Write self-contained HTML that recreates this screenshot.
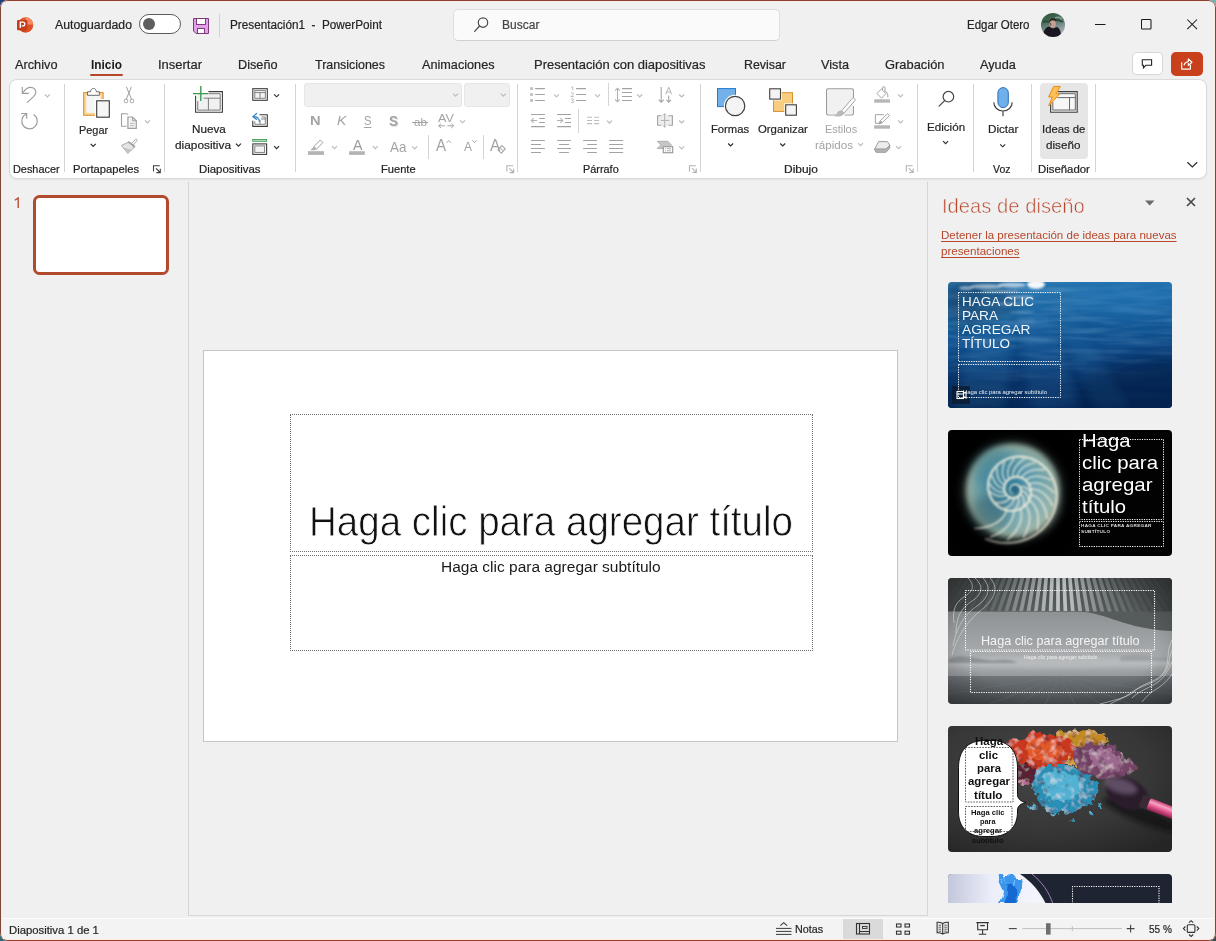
<!DOCTYPE html>
<html lang="es">
<head>
<meta charset="utf-8">
<title>Presentación1 - PowerPoint</title>
<style>
*{box-sizing:border-box;margin:0;padding:0}
html,body{width:1216px;height:941px;overflow:hidden;background:#f0f0f0;position:relative;font-family:"Liberation Sans",sans-serif}
#app{position:absolute;left:0;top:0;width:1216px;height:941px;overflow:hidden;background:#f0f0f0;border-radius:8px}
.a{position:absolute}
.t{position:absolute;white-space:pre;line-height:1;transform-origin:0 0;display:block}
svg{position:absolute;overflow:visible}
.sep{position:absolute;width:1px;background:#d4d4d4}
</style>
</head>

<body>
<div class="a" style="left:0;top:0;width:10px;height:10px;background:#1f3f7a"></div><div class="a" style="right:0;top:0;width:10px;height:10px;background:#6ab5b5"></div><div class="a" style="left:0;bottom:0;width:10px;height:10px;background:#2a6a7a"></div><div class="a" style="right:0;bottom:0;width:10px;height:10px;background:#2f4f55"></div>
<div id="app">
<!-- window frame -->
<div class="a" style="left:0;top:0;width:1216px;height:941px;border:1px solid #804636;border-top-color:#8a4034;border-bottom-color:#9c3f29;border-radius:7px;box-shadow:inset 0 0 0 1px #fbebe4;z-index:50;pointer-events:none"></div>
<!-- title bar -->
<div class="a" id="titlebar" style="left:1px;top:1px;width:1214px;height:47px;background:#f0f0f0"></div>
<div class="a" id="toggle" style="left:139px;top:14px;width:42px;height:20px;border:1px solid #5c5c5c;border-radius:10px;background:#fff"></div>
<div class="a" style="left:143px;top:18px;width:12px;height:12px;border-radius:6px;background:#5e5e5e"></div>
<div class="sep" style="left:219px;top:14px;height:23px;background:#d2d2d2"></div>
<div class="a" id="search" style="left:453px;top:9px;width:327px;height:32px;background:#fafafa;border:1px solid #dedede;border-bottom-color:#d0d0d0;border-radius:5px"></div>
<svg class="a" id="avatar" style="left:1041px;top:13px" width="24" height="24" viewBox="0 0 24 24">
<defs><clipPath id="avc"><circle cx="12" cy="12" r="12"/></clipPath>
<linearGradient id="avbg" x1="0" y1="0" x2=".35" y2="1"><stop offset="0" stop-color="#2a5238"/><stop offset=".35" stop-color="#3f6651"/><stop offset=".6" stop-color="#6b837d"/><stop offset="1" stop-color="#aab3b8"/></linearGradient>
<filter id="avb"><feGaussianBlur stdDeviation=".6"/></filter></defs>
<g clip-path="url(#avc)"><rect width="24" height="24" fill="url(#avbg)"/>
<g filter="url(#avb)"><path d="M2 9c3-2 6 1 9-1s7-1 11 1" stroke="#27493a" stroke-width="1.800" fill="none"/><path d="M14 5c2-1 5-1 7 1" stroke="#8aa595" stroke-width="1.200" fill="none"/>
<path d="M2.500 24c-1-5 1.500-9.500 5.500-10.500l4 2 4-1.500c3 1.500 4.500 5 3.500 10z" fill="#1b1722"/>
<ellipse cx="11.600" cy="10.800" rx="3.300" ry="3.900" fill="#c3a092"/><path d="M8.300 9.500c0-3 2-4.200 3.800-4.200 2 0 3.300 1.200 3.200 3-1.500-1-3-1.300-4.500-.8-1 .4-1.800 1-2.500 2z" fill="#2a211f"/>
<path d="M8.500 9.800c.8 0 1.400 1.200 1.200 2.600" stroke="#3a2a28" stroke-width="1" fill="none"/></g></g></svg>
<!-- tab underline -->
<div class="a" style="left:90px;top:73.5px;width:33px;height:2.6px;border-radius:1.3px;background:#b7472a"></div>
<!-- comment + share buttons -->
<div class="a" style="left:1131.5px;top:52.2px;width:31px;height:23.300px;background:#fff;border:1px solid #d6d6d6;border-radius:4.500px"></div>
<div class="a" style="left:1171px;top:52px;width:32px;height:24px;background:#c8401c;border-radius:5px"></div>
<!-- ribbon -->
<div class="a" id="ribbon" style="left:9px;top:79px;width:1197.5px;height:99.5px;background:#fff;border:1px solid #dadada;border-radius:8px;box-shadow:0 1px 2px rgba(0,0,0,.06)"></div>
<!-- group separators -->
<div class="sep" style="left:64px;top:84px;height:88px"></div>
<div class="sep" style="left:164px;top:84px;height:88px"></div>
<div class="sep" style="left:295px;top:84px;height:88px"></div>
<div class="sep" style="left:517px;top:84px;height:88px"></div>
<div class="sep" style="left:700px;top:84px;height:88px"></div>
<div class="sep" style="left:917px;top:84px;height:88px"></div>
<div class="sep" style="left:973px;top:84px;height:88px"></div>
<div class="sep" style="left:1031px;top:84px;height:88px"></div>
<div class="sep" style="left:1095px;top:84px;height:88px"></div>
<!-- small separators -->
<div class="sep" style="left:428px;top:135px;height:24px"></div>
<div class="sep" style="left:483px;top:135px;height:24px"></div>
<div class="sep" style="left:608px;top:83px;height:23px"></div>
<div class="sep" style="left:578px;top:109px;height:24px"></div>
<!-- font boxes -->
<div class="a" style="left:304px;top:83px;width:157.5px;height:23.5px;background:#f0f0f0;border:1px solid #e6e6e6;border-radius:3px"></div>
<div class="a" style="left:464px;top:83px;width:45.5px;height:23.5px;background:#f0f0f0;border:1px solid #e6e6e6;border-radius:3px"></div>
<!-- Ideas de diseño pressed button -->
<div class="a" style="left:1040px;top:83px;width:48px;height:75.5px;background:#e6e6e6;border-radius:4px"></div>

<!-- thumbnail pane -->
<div class="sep" style="left:188px;top:182px;height:734px;background:#d6d6d6"></div>
<div class="a" style="left:33px;top:195px;width:136px;height:80.300px;background:#fff;border:3px solid #b24a2e;border-radius:6.500px"></div>
<svg class="a" style="left:13px;top:196px" width="9" height="13" viewBox="13 196 9 13"><path d="M14.800 200.300l3.400-2.300v10" fill="none" stroke="#b7472a" stroke-width="1.350" stroke-linejoin="miter"/></svg>
<!-- editing area bottom line -->
<div class="a" style="left:188px;top:915px;width:740px;height:1px;background:#d6d6d6"></div>
<!-- slide -->
<div class="a" id="slide" style="left:203px;top:350px;width:695px;height:392px;background:#fff;border:1px solid #c6c6c6"></div>
<div class="a" style="left:290px;top:414px;width:523px;height:137.5px;border:1px dotted #6e6e6e"></div>
<div class="a" style="left:290px;top:554.5px;width:523px;height:96.5px;border:1px dotted #6e6e6e"></div>

<!-- designer pane -->
<div class="sep" style="left:927px;top:182px;height:734px;background:#d6d6d6"></div>
<svg id="thumbs" class="a" style="left:0;top:0" width="1216" height="941" viewBox="0 0 1216 941">
<defs>
  <clipPath id="c1"><rect x="948" y="282" width="224" height="126" rx="4"/></clipPath>
  <clipPath id="c2"><rect x="948" y="430" width="224" height="126" rx="4"/></clipPath>
  <clipPath id="c3"><rect x="948" y="578" width="224" height="126" rx="4"/></clipPath>
  <clipPath id="c4"><rect x="948" y="726" width="224" height="126" rx="4"/></clipPath>
  <clipPath id="c5"><path d="M948 903V878a4 4 0 0 1 4-4h216a4 4 0 0 1 4 4v25z"/></clipPath>
  <filter id="b1" x="-20%" y="-20%" width="140%" height="140%"><feGaussianBlur stdDeviation="1"/></filter>
  <filter id="b2" x="-30%" y="-30%" width="160%" height="160%"><feGaussianBlur stdDeviation="2.2"/></filter>
  <filter id="b4" x="-40%" y="-40%" width="180%" height="180%"><feGaussianBlur stdDeviation="4.5"/></filter>
  <filter id="b8" x="-50%" y="-50%" width="200%" height="200%"><feGaussianBlur stdDeviation="9"/></filter>
  <linearGradient id="sea" x1="0" y1="0" x2="0.12" y2="1">
    <stop offset="0" stop-color="#2a7ab4"/><stop offset=".3" stop-color="#18629f"/><stop offset=".62" stop-color="#0d4a88"/><stop offset="1" stop-color="#062c60"/>
  </linearGradient>
  <filter id="ripple" x="0" y="0" width="100%" height="100%"><feTurbulence type="fractalNoise" baseFrequency="0.018 0.16" numOctaves="2" seed="7" result="n"/><feColorMatrix in="n" type="matrix" values="0 0 0 0 0.45  0 0 0 0 0.7  0 0 0 0 0.92  1.6 0 0 0 -0.62"/></filter>
  <linearGradient id="seaFade" x1="0" y1="0" x2="0" y2="1"><stop offset="0" stop-color="#0b4582" stop-opacity="0"/><stop offset=".45" stop-color="#0b4582" stop-opacity=".1"/><stop offset=".8" stop-color="#072f63" stop-opacity=".75"/><stop offset="1" stop-color="#062a5c" stop-opacity=".9"/></linearGradient>
  <linearGradient id="seaR" x1="0" y1="0" x2="1" y2="0">
    <stop offset="0" stop-color="#000a30" stop-opacity="0"/><stop offset=".55" stop-color="#000a30" stop-opacity="0"/><stop offset="1" stop-color="#00143c" stop-opacity=".55"/>
  </linearGradient>
  <radialGradient id="shell" cx="0.5" cy="0.5" r="0.5">
    <stop offset="0" stop-color="#2a7896"/><stop offset=".3" stop-color="#4d97b2"/><stop offset=".6" stop-color="#6aa9b9"/><stop offset=".85" stop-color="#86b0ad"/><stop offset="1" stop-color="#a5b5a2"/>
  </radialGradient>
  <linearGradient id="g3top" x1="0" y1="0" x2="0" y2="1"><stop offset="0" stop-color="#454a4b"/><stop offset="1" stop-color="#5c6162"/></linearGradient>
  <linearGradient id="g3shade" x1="0" y1="0" x2="1" y2="0"><stop offset="0" stop-color="#3e4344" stop-opacity=".9"/><stop offset=".3" stop-color="#3e4344" stop-opacity=".15"/><stop offset=".55" stop-color="#3e4344" stop-opacity="0"/><stop offset=".8" stop-color="#3e4344" stop-opacity=".35"/><stop offset="1" stop-color="#3a3f40" stop-opacity=".9"/></linearGradient>
  <linearGradient id="g3mid" x1="0" y1="0" x2="0" y2="1"><stop offset="0" stop-color="#8f9294"/><stop offset=".5" stop-color="#a2a5a7"/><stop offset=".8" stop-color="#adb0b2"/><stop offset="1" stop-color="#94979a"/></linearGradient>
  <linearGradient id="g3bot" x1="0" y1="0" x2="0" y2="1"><stop offset="0" stop-color="#70757a"/><stop offset="1" stop-color="#474b4e"/></linearGradient>
  <radialGradient id="vig" cx="0.5" cy="0.5" r="0.72"><stop offset=".6" stop-color="#000" stop-opacity="0"/><stop offset="1" stop-color="#000" stop-opacity=".32"/></radialGradient>
  <radialGradient id="g4" cx="0.42" cy="0.35" r="0.8"><stop offset="0" stop-color="#474647"/><stop offset=".6" stop-color="#383738"/><stop offset="1" stop-color="#262526"/></radialGradient>
  <filter id="crumb" x="-10%" y="-10%" width="120%" height="120%">
    <feTurbulence type="fractalNoise" baseFrequency="0.14" numOctaves="2" seed="5" result="n"/>
    <feDisplacementMap in="SourceGraphic" in2="n" scale="11" xChannelSelector="R" yChannelSelector="G" result="d"/>
    <feColorMatrix in="n" type="matrix" values="0 0 0 0 1  0 0 0 0 .95  0 0 0 0 .9  1.2 0 0 0 -0.6" result="hl"/>
    <feComposite in="hl" in2="d" operator="in" result="hl2"/>
    <feColorMatrix in="n" type="matrix" values="0 0 0 0 .08  0 0 0 0 .03  0 0 0 0 .05  0 -2.4 0 0 1.08" result="sh"/>
    <feComposite in="sh" in2="d" operator="in" result="sh2"/>
    <feMerge><feMergeNode in="d"/><feMergeNode in="hl2"/><feMergeNode in="sh2"/></feMerge>
    <feGaussianBlur stdDeviation=".45"/>
  </filter>
  <filter id="wisp" x="-20%" y="-20%" width="140%" height="140%"><feTurbulence type="fractalNoise" baseFrequency="0.11" numOctaves="2" seed="2" result="n"/><feDisplacementMap in="SourceGraphic" in2="n" scale="7" xChannelSelector="R" yChannelSelector="G"/><feGaussianBlur stdDeviation=".5"/></filter>
  <linearGradient id="handle" x1="0" y1="0" x2="0" y2="1"><stop offset="0" stop-color="#c8417a"/><stop offset=".3" stop-color="#f6a3c4"/><stop offset=".6" stop-color="#e2558c"/><stop offset="1" stop-color="#8a1f4d"/></linearGradient>
  <linearGradient id="g5" x1="0" y1="0" x2="1" y2="0"><stop offset="0" stop-color="#c3c7db"/><stop offset=".45" stop-color="#eceefa"/><stop offset="1" stop-color="#f4f5fc"/></linearGradient>
</defs>

<!-- thumb 1 : underwater -->
<g clip-path="url(#c1)">
  <rect x="948" y="282" width="224" height="126" fill="url(#sea)"/>
  <rect x="948" y="282" width="224" height="126" filter="url(#ripple)" opacity=".38"/>
  <rect x="948" y="282" width="224" height="126" fill="url(#seaFade)"/>
  <ellipse cx="1185" cy="415" rx="120" ry="60" fill="#021a44" opacity=".55" filter="url(#b8)"/>
  <ellipse cx="950" cy="412" rx="70" ry="26" fill="#04204a" opacity=".45" filter="url(#b8)"/>
  <ellipse cx="975" cy="300" rx="40" ry="24" fill="#0b2f50" opacity=".5" filter="url(#b8)"/>
  <ellipse cx="1130" cy="296" rx="60" ry="22" fill="#2272b4" opacity=".5" filter="url(#b8)"/>
  <path d="M985 284 L955 408 L1005 408 L1015 284Z" fill="#4a95cc" opacity=".16" filter="url(#b4)"/>
  <path d="M1018 284 L1030 408 L1080 408 L1042 284Z" fill="#4a95cc" opacity=".13" filter="url(#b4)"/>
  <path d="M1040 284 L1095 408 L1130 408 L1056 284Z" fill="#4a95cc" opacity=".1" filter="url(#b4)"/>
  <g filter="url(#b1)" fill="#fff">
    <ellipse cx="1036" cy="284.5" rx="9" ry="4.2" opacity=".95"/>
    <ellipse cx="1012" cy="285" rx="14" ry="2.6" opacity=".6"/>
    <ellipse cx="986" cy="286.500" rx="16" ry="2.600" opacity=".5"/>
    <ellipse cx="966" cy="288" rx="7" ry="2" opacity=".45"/>
    <ellipse cx="1000" cy="291.5" rx="20" ry="1.600" opacity=".3"/>
    <ellipse cx="1020" cy="297" rx="14" ry="1.800" opacity=".32"/>
    <ellipse cx="1012" cy="304" rx="16" ry="1.800" opacity=".22"/>
    <ellipse cx="1022" cy="312" rx="12" ry="1.800" opacity=".18"/>
    <ellipse cx="1026" cy="320" rx="10" ry="1.600" opacity=".14"/>
  </g>
  <rect x="952" y="386" width="18" height="18" fill="#0b1a30" opacity=".8"/>
</g>
<rect x="958.5" y="292.5" width="102" height="69" fill="none" stroke="#fff" stroke-width="1" stroke-dasharray="1.2 1.2"/>
<rect x="958.5" y="364.5" width="102" height="33" fill="none" stroke="#fff" stroke-width="1" stroke-dasharray="1.2 1.2"/>
<g fill="none" stroke="#fff" stroke-width="1.1"><rect x="957" y="391.5" width="6.5" height="7"/><path d="M963.5 393.5l2.5-1.5v6l-2.5-1.5M957 394h6.500"/></g>

<!-- thumb 2 : nautilus -->
<g clip-path="url(#c2)">
  <rect x="948" y="430" width="224" height="126" fill="#020202"/>
  <g transform="translate(1014.500 490.500) scale(1.14) translate(-1014.500 -486)">
  <circle cx="1013" cy="487" r="45" fill="#7fa39e" opacity=".42" filter="url(#b4)"/>
  <circle cx="1013" cy="486" r="41" fill="url(#shell)" filter="url(#b2)" opacity=".92"/>
  <circle cx="1032" cy="502" r="22" fill="#c9cfc0" opacity=".3" filter="url(#b4)"/>
  <circle cx="998" cy="468" r="20" fill="#1f6a88" opacity=".4" filter="url(#b4)"/>
  <circle cx="992" cy="505" r="16" fill="#10303c" opacity=".35" filter="url(#b4)"/>
  <g fill="none" stroke-linecap="round" filter="url(#b1)">
    <path d="M1013.0 488.1 L1012.8 488.0 L1012.5 487.9 L1012.3 487.7 L1012.1 487.5 L1011.9 487.4 L1011.7 487.1 L1011.5 486.9 L1011.4 486.7 L1011.3 486.4 L1011.2 486.1 L1011.1 485.9 L1011.0 485.6 L1011.0 485.3 L1011.0 485.0 L1011.0 484.6 L1011.0 484.3 L1011.1 484.0 L1011.2 483.7 L1011.3 483.4 L1011.5 483.1 L1011.6 482.8 L1011.8 482.5 L1012.1 482.3 L1012.3 482.0 L1012.6 481.8 L1012.9 481.6 L1013.2 481.5 L1013.6 481.3 L1013.9 481.2 L1014.3 481.1 L1014.7 481.0 L1015.1 481.0 L1015.5 481.0 L1015.8 481.1 L1016.2 481.1 L1016.6 481.3 L1017.0 481.4 L1017.4 481.6 L1017.8 481.8 L1018.1 482.0 L1018.5 482.3 L1018.8 482.6 L1019.1 483.0 L1019.3 483.4 L1019.5 483.8 L1019.7 484.2 L1019.9 484.6 L1020.0 485.1 L1020.1 485.6 L1020.2 486.0 L1020.2 486.5 L1020.1 487.0 L1020.0 487.5 L1019.9 488.0 L1019.7 488.5 L1019.5 489.0 L1019.3 489.5 L1019.0 489.9 L1018.6 490.4 L1018.2 490.8 L1017.8 491.1 L1017.4 491.5 L1016.9 491.8 L1016.4 492.0 L1015.8 492.3 L1015.2 492.4 L1014.6 492.6 L1014.0 492.6 L1013.4 492.7 L1012.8 492.6 L1012.1 492.6 L1011.5 492.4 L1010.9 492.2 L1010.3 492.0 L1009.7 491.7 L1009.1 491.3 L1008.5 490.9 L1008.0 490.4 L1007.5 489.9 L1007.1 489.3 L1006.7 488.7 L1006.3 488.1 L1006.0 487.4 L1005.8 486.7 L1005.6 485.9 L1005.5 485.2 L1005.4 484.4 L1005.5 483.6 L1005.5 482.8 L1005.7 482.0 L1005.9 481.2 L1006.2 480.4 L1006.6 479.6 L1007.0 478.9 L1007.5 478.2 L1008.1 477.5 L1008.7 476.9 L1009.4 476.3 L1010.2 475.8 L1011.0 475.3 L1011.8 474.9 L1012.7 474.6 L1013.6 474.3 L1014.6 474.2 L1015.6 474.1 L1016.6 474.1 L1017.6 474.1 L1018.6 474.3 L1019.6 474.5 L1020.6 474.9 L1021.6 475.3 L1022.5 475.8 L1023.5 476.5 L1024.3 477.2 L1025.1 477.9 L1025.9 478.8 L1026.6 479.7 L1027.2 480.7 L1027.7 481.8 L1028.2 482.9 L1028.5 484.0 L1028.8 485.2 L1028.9 486.5 L1029.0 487.7 L1028.9 489.0 L1028.7 490.3 L1028.5 491.6 L1028.1 492.8 L1027.6 494.1 L1026.9 495.3 L1026.2 496.4 L1025.4 497.6 L1024.4 498.6 L1023.4 499.6 L1022.2 500.5 L1021.0 501.3 L1019.7 502.0 L1018.3 502.6 L1016.9 503.1 L1015.4 503.5 L1013.8 503.7 L1012.2 503.8 L1010.6 503.8 L1009.0 503.6 L1007.4 503.3 L1005.8 502.8 L1004.2 502.2 L1002.6 501.5 L1001.1 500.6 L999.7 499.6 L998.4 498.4 L997.1 497.2 L995.9 495.8 L994.9 494.2 L993.9 492.6 L993.1 490.9 L992.5 489.1 L991.9 487.2 L991.6 485.3 L991.4 483.3 L991.4 481.3 L991.5 479.2 L991.9 477.2 L992.4 475.1 L993.1 473.1 L993.9 471.2 L995.0 469.2 L996.2 467.4 L997.6 465.7 L999.2 464.0 L1000.9 462.5 L1002.8 461.1 L1004.8 459.9 L1006.9 458.8 L1009.2 457.9 L1011.5 457.2 L1014.0 456.7 L1016.4 456.3 L1019.0 456.2 L1021.6 456.4 L1024.2 456.7 L1026.7 457.3 L1029.3 458.1 L1031.8 459.1 L1034.3 460.4 L1036.6 461.9 L1038.9 463.6 L1041.0 465.5 L1043.0 467.6 L1044.8 469.9 L1046.4 472.4 L1047.8 475.0 L1049.1 477.8 L1050.0 480.7 L1050.8 483.8 L1051.3 486.9 L1051.5 490.1 L1051.4 493.3 L1051.1 496.6 L1050.4 499.9 L1049.5 503.1 L1048.3 506.3 L1046.8 509.5 L1045.0 512.5 L1043.0 515.4 L1040.7 518.1 L1038.1 520.7 L1035.2 523.0 L1032.2 525.2 L1028.9 527.1 L1025.4 528.7 L1021.8 530.0 L1018.0 531.1 L1014.1 531.8 L1010.0 532.2 L1006.0 532.2 L1001.8 531.9 L997.7 531.2 L993.6 530.2 L989.5 528.8" stroke="#efeedd" stroke-width="2" opacity=".88"/>
    <path d="M1019.3 483.4Q1023.6 481.8 1028.0 486.1M1020.2 486.0Q1025.0 486.7 1026.9 493.0M1019.6 488.9Q1023.8 492.1 1022.4 499.0M1017.5 491.4Q1019.9 496.5 1014.9 502.4M1014.3 492.6Q1013.9 498.7 1006.2 501.7M1010.7 492.1Q1007.1 497.7 998.3 496.5M1007.4 489.8Q1001.3 493.2 993.5 487.5M1006.0 487.4Q998.7 488.7 992.9 480.4M1005.4 484.5Q997.7 483.3 994.8 473.1M1005.9 481.4Q998.6 477.6 999.2 466.5M1007.3 478.5Q1001.4 472.2 1005.7 461.4M1009.7 476.1Q1006.0 467.8 1014.0 458.5M1013.0 474.5Q1012.1 465.1 1023.2 458.5M1016.7 474.1Q1019.0 464.4 1032.3 461.7M1020.6 474.9Q1026.2 466.0 1040.3 467.9M1024.2 477.0Q1032.8 470.2 1046.2 476.8M1027.0 480.4Q1037.9 476.5 1049.0 487.6M1028.7 484.7Q1040.8 484.5 1048.0 499.3M1028.9 489.5Q1041.0 493.4 1043.1 510.6M1027.4 494.4Q1038.1 502.4 1034.4 520.2M1024.3 498.7Q1032.2 510.3 1022.4 526.8M1019.8 502.0Q1023.7 516.2 1008.3 529.2M1014.1 503.7Q1013.1 519.2 993.5 526.8M1008.0 503.4Q1001.7 518.5 979.5 519.4" stroke="#f1efe0" stroke-width="1.400" opacity=".8"/>
  </g>
  <circle cx="1014.5" cy="485.5" r="4" fill="#1f5f7c" opacity=".7" filter="url(#b1)"/>
  <circle cx="1013" cy="486.500" r="59" fill="none" stroke="#020202" stroke-width="22" filter="url(#b4)"/>
</g>
</g>
<rect x="1079.500" y="439.500" width="84" height="80" fill="none" stroke="#fff" stroke-width="1" stroke-dasharray="1.2 1.2"/>
<rect x="1079.500" y="521.500" width="84" height="25" fill="none" stroke="#fff" stroke-width="1" stroke-dasharray="1.2 1.2"/>

<!-- thumb 3 : grey architecture -->
<g clip-path="url(#c3)">
  <rect x="948" y="578" width="224" height="36" fill="url(#g3top)"/>
  <g stroke="#c6caca" stroke-width="3.700"><path d="M952.3 576L921.2 616" stroke-opacity="0.18"/><path d="M958.2 576L928.8 616" stroke-opacity="0.18"/><path d="M964.0 576L936.4 616" stroke-opacity="0.18"/><path d="M969.9 576L944.0 616" stroke-opacity="0.18"/><path d="M975.8 576L951.6 616" stroke-opacity="0.18"/><path d="M981.7 576L959.2 616" stroke-opacity="0.18"/><path d="M987.5 576L966.8 616" stroke-opacity="0.18"/><path d="M993.4 576L974.4 616" stroke-opacity="0.18"/><path d="M999.3 576L982.0 616" stroke-opacity="0.23"/><path d="M1005.1 576L989.6 616" stroke-opacity="0.31"/><path d="M1011.0 576L997.2 616" stroke-opacity="0.38"/><path d="M1016.9 576L1004.8 616" stroke-opacity="0.46"/><path d="M1022.8 576L1012.4 616" stroke-opacity="0.54"/><path d="M1028.6 576L1020.0 616" stroke-opacity="0.62"/><path d="M1034.5 576L1027.6 616" stroke-opacity="0.69"/><path d="M1040.4 576L1035.2 616" stroke-opacity="0.77"/><path d="M1046.3 576L1042.8 616" stroke-opacity="0.85"/><path d="M1052.1 576L1050.4 616" stroke-opacity="0.92"/><path d="M1058.0 576L1058.0 616" stroke-opacity="1.00"/><path d="M1063.9 576L1065.6 616" stroke-opacity="0.92"/><path d="M1069.7 576L1073.2 616" stroke-opacity="0.85"/><path d="M1075.6 576L1080.8 616" stroke-opacity="0.77"/><path d="M1081.5 576L1088.4 616" stroke-opacity="0.69"/><path d="M1087.4 576L1096.0 616" stroke-opacity="0.62"/><path d="M1093.2 576L1103.6 616" stroke-opacity="0.54"/><path d="M1099.1 576L1111.2 616" stroke-opacity="0.46"/><path d="M1105.0 576L1118.8 616" stroke-opacity="0.38"/><path d="M1110.9 576L1126.4 616" stroke-opacity="0.31"/><path d="M1116.7 576L1134.0 616" stroke-opacity="0.23"/><path d="M1122.6 576L1141.6 616" stroke-opacity="0.18"/><path d="M1128.5 576L1149.2 616" stroke-opacity="0.18"/><path d="M1134.3 576L1156.8 616" stroke-opacity="0.18"/><path d="M1140.2 576L1164.4 616" stroke-opacity="0.18"/><path d="M1146.1 576L1172.0 616" stroke-opacity="0.18"/><path d="M1152.0 576L1179.6 616" stroke-opacity="0.18"/><path d="M1157.8 576L1187.2 616" stroke-opacity="0.18"/><path d="M1163.7 576L1194.8 616" stroke-opacity="0.18"/></g>
  <rect x="948" y="578" width="224" height="36" fill="url(#g3shade)"/>
  <rect x="948" y="612" width="224" height="65" fill="url(#g3mid)"/>
  <path d="M1080 611.500C1108 613 1124 629 1172 631V611.500Z" fill="#565b5c"/>
  <path d="M948 611.500H1082" stroke="#6a6f70" stroke-width="1.200"/>
  <ellipse cx="1060" cy="662" rx="120" ry="6" fill="#c0c3c5" opacity=".55" filter="url(#b2)"/>
  <path d="M948 659c8-4 18-3 28-1s16 3 24 2 14 1 18 3H948z" fill="#7f8488" opacity=".75" filter="url(#b1)"/>
  <path d="M1120 657c10-3 22-2 34 0 6 1 12 1 18 0v4h-52z" fill="#8a8f93" opacity=".5" filter="url(#b1)"/>
  <rect x="948" y="676" width="224" height="28" fill="url(#g3bot)"/>
  <g stroke="#7b8083" stroke-width=".6" opacity=".5"><path d="M1060 676L990 704M1060 676L1020 704M1060 676L1045 704M1060 676L1075 704M1060 676L1100 704M1060 676L1130 704M1060 676L948 694M1060 676L1172 694"/></g>
  <rect x="948" y="578" width="224" height="126" fill="url(#vig)"/>
  <g fill="none" stroke="#dfe2e2" stroke-width=".7" opacity=".8">
    <path d="M968 578c8 8 4 14-4 19s-12 12-10 26M975 578c10 9 6 17-3 23s-16 14-16 32M983 578c10 11 4 21-6 28s-20 18-24 40M990 578c12 13 0 25-10 33s-22 22-28 44"/>
    <path d="M1172 640c-6 12-2 22-8 32s-20 10-28 18-22 10-36 14M1172 650c-4 10-2 18-10 26s-22 10-30 16-14 8-22 12M1172 662c-4 8-6 14-14 20s-18 8-26 16M1172 674c-4 6-8 10-14 14s-12 8-16 14"/>
  </g>
</g>
<rect x="965.500" y="590.500" width="189" height="59.500" fill="none" stroke="#fff" stroke-width="1.100" stroke-dasharray="1.2 1.2"/>
<rect x="970.500" y="651.500" width="181" height="41" fill="none" stroke="#fff" stroke-width="1.100" stroke-dasharray="1.2 1.2"/>

<!-- thumb 4 : makeup -->
<g clip-path="url(#c4)">
  <rect x="948" y="726" width="224" height="126" fill="url(#g4)"/>
  <g filter="url(#crumb)">
    <!-- gold -->
    <path d="M1052 738l8-7 12 1 10-3 14 2 10 5 2 6-10 3-12-1-12 3-10 1-10-4z" fill="#c48a22"/>
    <!-- red/orange -->
    <path d="M1008 742l12-3 12-6 14 0 14 4 12 5 6 8-2 8-8 6-12 5-14 5-10 2-8-6-6-8-10-6-6-6z" fill="#c9391b"/>
    <path d="M1028 740l14-3 14 5 8 8-8 9-14 4-12-5-6-8z" fill="#e25a2b"/>
    <path d="M1068 758l8-2 5 5-4 6-8-1z" fill="#d8a236"/>
    <!-- maroon -->
    <path d="M1016 767l10-4 10 5 0 10-8 6-10-4-4-7z" fill="#5a2231"/>
    <path d="M1020 781l7-2 3 3-5 4-6-1z" fill="#b46c8e"/>
    <!-- purple -->
    <path d="M1076 748l12-6 14 1 12 4 10 7 10 9 2 6-8 5-12 4-14 2-14-4-10-8-6-10z" fill="#774569"/>
    <path d="M1092 748l14 0 10 6 8 8-6 8-14 2-12-6-4-9z" fill="#9c6b8f"/>
    <!-- blue -->
    <path d="M1036 772l12-7 16 0 16 5 12 9 6 10-2 10-10 7-14 6-14 2-12-4-8-9-4-11-2-9z" fill="#2a8fb6"/>
    <path d="M1044 774l16-4 16 6 8 10-6 10-14 6-14-3-8-10z" fill="#52b2d3"/>
    <path d="M1026 806l6-2 5 3-5 4zM1050 814l5-1 2 3-4 2zM1088 813l4-1 2 3-4 2zM1070 820l3-1 1 2-3 1zM1098 806l3-1 1 2-3 1z" fill="#3ea2c6"/>
  </g>
  <!-- brush -->
  <ellipse cx="1142" cy="815" rx="42" ry="8" transform="rotate(22 1142 815)" fill="#0e0e0e" opacity=".65" filter="url(#b2)"/>
  <ellipse cx="1127" cy="793.500" rx="22" ry="15" transform="rotate(24 1127 793.500)" fill="#2a1e2c" filter="url(#b1)"/>
  <ellipse cx="1121" cy="786" rx="17" ry="7.500" transform="rotate(16 1121 786)" fill="#75627c" opacity=".7" filter="url(#b2)"/>
  <g transform="rotate(21 1143 801)"><rect x="1141" y="795" width="10" height="13" rx="1.500" fill="#3a2a36"/><rect x="1149" y="795.500" width="40" height="12" rx="2" fill="url(#handle)"/></g>
</g>
<path d="M984 740.500h8c16 0 25.500 10 25.500 27v27c0 4 3 7 8.500 8-5 1-8.500 3.500-8.500 7.500v2c0 15-9.500 24.500-25.500 24.500h-8c-16 0-25.500-9.500-25.500-24.500v-44.500c0-17 9.500-27 25.500-27z" fill="#fff" stroke="#111" stroke-width="1"/>
<rect x="965.500" y="747.500" width="47.500" height="54.500" fill="none" stroke="#333" stroke-width=".8" stroke-dasharray="1.6 1.2"/>
<rect x="965.500" y="806.500" width="46.500" height="25" fill="none" stroke="#333" stroke-width=".8" stroke-dasharray="1.6 1.2"/>

<!-- thumb 5 : ink -->
<g clip-path="url(#c5)">
  <rect x="948" y="874" width="224" height="30" fill="#1f2432"/>
  <path d="M948 874h72c12 8 20 18 26 30H948z" fill="url(#g5)"/>
  <path d="M1032 874c10 8 17 18 21 30" fill="none" stroke="#b58ac8" stroke-width=".9"/>
  <g filter="url(#wisp)">
    <path d="M999 875l3-2 3 5 4-5 4 1 3 5 5 0 2 6-2 9-4 6-3 4h-16l3-6 2-7-3-6-2-5z" fill="#3b97ee"/>
    <path d="M1008 884l6 2 4 6-2 8-5 5h-8l3-7z" fill="#1269d0"/>
    <path d="M1001 880l2 4M1006 878l1 5M1016 882l-3 4" stroke="#7cc0f6" stroke-width="1.200" fill="none"/>
  </g>
  <path d="M1072.500 904V886.500h86.500V904" fill="none" stroke="#fff" stroke-width="1.100" stroke-dasharray="1.2 1.2"/>
</g>
</svg>
<!-- pane header controls -->
<svg class="a" style="left:1145px;top:200px" width="10" height="6" viewBox="0 0 10 6"><path d="M0 .5h9.500L4.750 5.500z" fill="#6a6a6a"/></svg>
<svg class="a" style="left:1186px;top:197px" width="10" height="10" viewBox="0 0 10 10"><path d="M1 1l8 8M9 1l-8 8" stroke="#4a4a4a" stroke-width="1.700" fill="none"/></svg>

<!-- status bar -->
<div class="a" id="status" style="left:1px;top:918px;width:1214px;height:22px;background:#f3f3f3;border-top:1px solid #fdfdfd"></div>
<div class="a" style="left:843px;top:919px;width:40px;height:21px;background:#dadada"></div>

<!-- icons overlay (page coordinates) -->
<svg id="icons" class="a" style="left:0;top:0;pointer-events:none" width="1216" height="941" viewBox="0 0 1216 941" fill="none">
<defs>
  <path id="cv" d="M.3 .2l2.500 2.500 2.500-2.500" fill="none" stroke-width="1.150" stroke-linecap="butt" stroke-linejoin="miter"/>
  <linearGradient id="ppt" x1="0" y1="0" x2="1" y2="1"><stop offset="0" stop-color="#f58a62"/><stop offset="1" stop-color="#c9461e"/></linearGradient>
  <g id="launch" stroke-width="1.100" fill="none"><path d="M.5 6.300V.5h6.300"/><path d="M3 3l4.200 4.200M7.300 3.400v3.900h-3.900"/></g>
</defs>

<!-- ===== title bar ===== -->
<g id="logo">
  <circle cx="25.600" cy="24.800" r="7.600" fill="#e2582c"/>
  <path d="M25.600 17.200a7.600 7.600 0 0 1 7.600 7.600h-7.600z" fill="#f58a62"/>
  <path d="M25.600 24.800h7.600a7.600 7.600 0 0 1-7.600 7.600z" fill="#dc5225" opacity=".9"/>
  <path d="M18 24.800h7.600v7.600a7.600 7.600 0 0 1-7.600-7.600z" fill="#c64a20"/>
  <rect x="17" y="20" width="10.400" height="10.200" rx="1" fill="#c43e1c"/>
  <path d="M20.300 28.100v-6h2.600a1.900 1.900 0 0 1 0 3.800h-1.300" stroke="#fff" stroke-width="1.350" fill="none"/>
</g>
<g id="save">
  <path d="M193.500 18.500h15v15h-12.500l-2.500-2.500z" fill="#e3a0ea" stroke="#80397b" stroke-width="1"/>
  <rect x="196.500" y="18.500" width="9" height="6" fill="#fff" stroke="#80397b" stroke-width="1"/>
  <rect x="197.500" y="28.500" width="7" height="5" fill="#fff" stroke="#80397b" stroke-width="1"/>
</g>
<g id="srch" stroke="#484848" stroke-width="1.200" stroke-linecap="round"><circle cx="483" cy="22.600" r="4.700"/><path d="M479.600 26l-5 5.300"/></g>
<g id="winctl" stroke="#1a1a1a" stroke-width="1.050">
  <path d="M1095 24.500h10.500"/>
  <rect x="1141.500" y="19.500" width="9.500" height="9.500" rx=".8"/>
  <path d="M1187.300 19.500l9.700 9.700M1197 19.500l-9.700 9.700"/>
</g>
<!-- comment icon -->
<path d="M1142.300 59.800h9.300v5.500h-5.800l-2.400 2.600v-2.600h-1.100z" stroke="#222" stroke-width="1.100" stroke-linejoin="miter"/>
<!-- share icon -->
<g stroke="#fff" stroke-width="1.150" stroke-linejoin="round" stroke-linecap="butt" fill="none">
  <path d="M1181.700 62.300v6.800h8.700v-4.300"/>
  <path d="M1184 65.300c.6-2.300 2-3.500 4.300-3.700v-2.700l3.700 3.300-3.700 3.300v-2.500"/>
</g>

<!-- ===== Deshacer ===== -->
<g stroke="#9c9c9c" stroke-width="1.150" stroke-linecap="butt">
  <path d="M22.300 87v6.400h6.600"/>
  <path d="M22.700 93C25 89.500 28 87.300 30.600 87.300c3.300 0 5.300 2.500 5.200 5.200-.1 2-1.300 3.200-2.800 4.700L27.100 102.700"/>
  <path d="M21.200 113.500h5.500v5.300"/>
  <path d="M26.300 114.100A7.750 7.750 0 1 0 33.500 114.500"/>
</g>
<use href="#cv" x="44.600" y="94.200" stroke="#bababa"/>

<!-- ===== Portapapeles ===== -->
<g id="paste">
  <rect x="83.700" y="92.600" width="19.400" height="22.700" fill="#fbd591" stroke="#d9892a" stroke-width="1"/>
  <rect x="86.300" y="95" width="14.200" height="17.800" fill="#f5f5f5"/>
  <path d="M87.500 95.300v-3.500h3c.2-2 1.400-3.400 2.950-3.400s2.750 1.400 2.950 3.400h3v3.500z" fill="#fff" stroke="#6a6a6a" stroke-width="1"/>
  <rect x="94.800" y="99" width="16.200" height="19.800" fill="#fff"/>
  <rect x="96.700" y="100.800" width="12.600" height="16.400" fill="#f6f6f6" stroke="#383838" stroke-width="1.100"/>
</g>
<use href="#cv" x="90.400" y="143.700" stroke="#2b2b2b"/>
<g stroke="#a0a0a0" stroke-width="1" fill="none">
  <!-- scissors -->
  <path d="M126.400 86.800l5.200 12.600M131.400 86.800l-5.200 12.600"/>
  <rect x="124.300" y="99.300" width="3.300" height="3.300" rx="1"/><rect x="130.300" y="99.300" width="3.300" height="3.300" rx="1"/>
  <!-- copy -->
  <path d="M127.400 113.800h-5.900v12.400h5" stroke-width="1.100"/>
  <path d="M127.200 114l1 1" />
  <path d="M127.900 117h4.600l3.800 3.800v7.500h-8.400z" fill="#f2f2f2" stroke-width="1.200"/>
  <path d="M132.500 117v3.800h3.800"/><path d="M130 123.400h4.300M130 125.600h4.300" stroke="#bababa"/>
</g>
<use href="#cv" x="144.700" y="120.200" stroke="#bababa"/>
<!-- format painter -->
<g stroke-linejoin="round">
  <path d="M135.400 139.500a1 1 0 0 1 1.500 1.300l-4.300 4.600-1.600-1.400z" fill="#fff" stroke="#a6a6a6" stroke-width="1"/>
  <path d="M128.600 142.100l6.100 4.800-6.900 6.500-6.400-7.900z" fill="#e4e4e4" stroke="#ababab" stroke-width="1"/>
  <path d="M122.800 147.200l9.300 2.700-4.300 3.500z" fill="#c4c4c4"/>
  <path d="M128.300 141.700l6.700 5.300" stroke="#a0a0a0" stroke-width="1.600"/>
</g>
<use href="#launch" x="153" y="165.300" stroke="#3f3f3f"/>

<!-- ===== Diapositivas ===== -->
<g id="newslide">
  <rect x="197.300" y="93.300" width="23.300" height="17.300" fill="#f1f1f1"/>
  <path d="M208.400 91.600h14v20.600h-26.800v-16.500" stroke="#3b3b3b" stroke-width="1.100"/>
  <path d="M208.400 93.700h11.800v16.400h-22.500v-9" stroke="#7a7a7a" stroke-width="1"/>
  <path d="M203.500 98.200h16.700M208.400 98.200v11.900" stroke="#7a7a7a" stroke-width="1"/>
  <path d="M200.800 86.100v14.800M193 93.600h15" stroke="#3c9a50" stroke-width="1.400"/>
</g>
<use href="#cv" x="235.600" y="143.500" stroke="#2b2b2b"/>
<g id="layout">
  <rect x="252.800" y="88.700" width="14.500" height="11.600" stroke="#3b3b3b" stroke-width="1.100" fill="#fff"/>
  <rect x="254.800" y="90.600" width="10.500" height="7.700" stroke="#777" stroke-width=".9" fill="#f3f3f3"/>
  <path d="M254.800 92.600h10.500M260 92.600v5.700" stroke="#777" stroke-width=".9"/>
</g>
<use href="#cv" x="273.800" y="94.100" stroke="#2b2b2b"/>
<g id="reset">
  <path d="M259.500 114.800h7.800v11.600h-14.500v-5.600" stroke="#3b3b3b" stroke-width="1.100"/>
  <path d="M261.500 117h3.800v7.300h-10.500v-3" stroke="#777" stroke-width=".9"/><path d="M261 119h4.300M260 120v4.300" stroke="#777" stroke-width=".9"/>
  <path d="M252.900 116.700l3.700-3.200M252.900 116.700l3.700 2.700M253.300 116.700c3.800-.4 5.800 1.400 6.100 4.800" stroke="#3a86c8" stroke-width="1.300" stroke-linecap="round"/>
</g>
<g id="section">
  <rect x="252.700" y="139.500" width="14" height="1.800" fill="#c8e6cf" stroke="#3c9a50" stroke-width=".9"/>
  <rect x="252.800" y="143.900" width="13.800" height="10.500" stroke="#3b3b3b" stroke-width="1.100" fill="#fff"/>
  <rect x="254.800" y="145.900" width="9.800" height="6.500" stroke="#777" stroke-width=".9" fill="#f3f3f3"/>
</g>
<use href="#cv" x="273.800" y="146" stroke="#2b2b2b"/>

<!-- ===== Fuente ===== -->
<use href="#cv" x="452.800" y="93.500" stroke="#bababa"/>
<use href="#cv" x="500.500" y="93.500" stroke="#bababa"/>
<path d="M412 122.500h16" stroke="#a0a0a0" stroke-width="1"/>
<!-- AV spacing arrows -->
<g stroke="#a6a6a6" stroke-width="1">
  <path d="M438.600 125.800h6.300M441 123.600l-2.400 2.200 2.400 2.200"/>
  <path d="M447.400 125.800h6.300M451.300 123.600l2.400 2.200-2.400 2.200"/>
</g>
<use href="#cv" x="459.700" y="120.100" stroke="#bababa"/>
<!-- highlighter -->
<rect x="308" y="151.200" width="16" height="3.700" fill="#b4b4b4"/>
<g>
  <path d="M320.300 140l2.600 2.600-6.300 6.500-2.700-2.600z" fill="#fff" stroke="#a0a0a0" stroke-width="1" stroke-linejoin="round"/>
  <path d="M313.900 146.500l2.700 2.600-1.400 1.200h-4.800z" fill="#b0b0b0"/>
</g>
<use href="#cv" x="331.700" y="146" stroke="#bababa"/>
<rect x="349.100" y="151.200" width="15.700" height="3.700" fill="#b4b4b4"/>
<use href="#cv" x="372.500" y="146" stroke="#bababa"/>
<use href="#cv" x="411.900" y="146.200" stroke="#bababa"/>
<path d="M446.600 142.800l2.300-2.200 2.300 2.200" stroke="#a6a6a6" stroke-width="1"/>
<path d="M472.400 140.400l2.200 2.200 2.200-2.200" stroke="#a6a6a6" stroke-width="1"/>
<path d="M501.900 145.600l3.400 3.300-4 4.300-3.400-3.300z" fill="#fff" stroke="#a6a6a6" stroke-width="1.100" stroke-linejoin="round"/>
<path d="M500 147.700l3.300 3.300" stroke="#a6a6a6" stroke-width="1"/>
<use href="#launch" x="506.300" y="165.300" stroke="#b2b2b2"/>

<!-- ===== Párrafo ===== -->
<g stroke="#a3a3a3" stroke-width="1.050">
  <!-- bullets -->
  <path d="M535.100 88.600h9.800M535.100 94.500h9.800M535.100 100.500h9.800"/>
  <!-- numbering lines -->
  <path d="M576.100 88.600h9.900M576.100 94.500h9.900M576.100 100.500h9.900"/>
  <!-- line spacing -->
  <path d="M622 88.600h10M622 92.500h10M622 96.500h10M622 100.500h10"/>
  <path d="M617.500 88.300v13.400M615.100 90.600l2.400-2.400 2.400 2.400M615.100 99.400l2.400 2.400 2.400-2.400" stroke="#b0b0b0"/>
  <!-- decrease indent -->
  <path d="M531 114.400h13.900M531 126.600h13.900M539.200 118.500h5.700M539.200 122.400h5.700"/>
  <path d="M531.300 120.500h5.700M533.600 118.200l-2.300 2.300 2.300 2.300" stroke="#b0b0b0"/>
  <!-- increase indent -->
  <path d="M557.100 114.400h13.900M557.100 126.600h13.900M565 118.500h6M565 122.400h6"/>
  <path d="M557.100 120.500h5.600M560.400 118.200l2.300 2.300-2.300 2.300" stroke="#b0b0b0"/>
  <!-- columns -->
  <path d="M587 117.300h5M587 120.500h5M587 123.600h5M594.100 117.300h5M594.100 120.500h5M594.100 123.600h5" stroke="#bcbcbc"/>
  <!-- align left -->
  <path d="M531 140.500h13.900M531 144.500h10M531 148.500h13.900M531 152.500h10"/>
  <!-- center -->
  <path d="M557.100 140.500h13.900M559.100 144.500h9.800M557.100 148.500h13.900M559.100 152.500h9.800"/>
  <!-- right -->
  <path d="M583.100 140.500h13.800M587.200 144.500h9.700M583.100 148.500h13.800M587.200 152.500h9.700"/>
  <!-- justify -->
  <path d="M609.100 140.500h14M609.100 144.500h14M609.100 148.500h14M609.100 152.500h14"/>
</g>
<g fill="#c2c2c2"><rect x="530.100" y="87.200" width="2.900" height="2.800"/><rect x="530.100" y="93.100" width="2.900" height="2.800"/><rect x="530.100" y="99.100" width="2.900" height="2.800"/></g>
<g stroke="#b8b8b8" stroke-width=".9">
  <path d="M571.400 87.500l1.300-.8v3.700"/>
  <path d="M571 93.300c.5-.8 2.600-.9 2.600.4 0 1-2 1.700-2.600 2.800h2.800"/>
  <path d="M571 99.300c.6-.7 2.600-.6 2.500.5-.1.700-.7.900-1.400.9.900 0 1.600.3 1.600 1 0 1.200-2.200 1.200-2.800.4"/>
</g>
<use href="#cv" x="553.700" y="94.100" stroke="#bababa"/>
<use href="#cv" x="594.800" y="94.100" stroke="#bababa"/>
<use href="#cv" x="636.900" y="94.300" stroke="#bababa"/>
<use href="#cv" x="606.700" y="120.400" stroke="#bababa"/>
<!-- text direction -->
<g stroke="#a3a3a3" stroke-width="1.050">
  <path d="M661.200 86.900v15.200M658.700 99.700l2.500 2.500 2.500-2.500"/>
  <path d="M668.700 95.400v6.700M666.400 99.900l2.300 2.300 2.300-2.300"/>
  <path d="M665.700 94.300l3-7.100 3 7.100M666.700 92h4" stroke="#b4b4b4" stroke-width="1"/>
</g>
<use href="#cv" x="678.900" y="94.300" stroke="#bababa"/>
<!-- align text -->
<rect x="658" y="116" width="14.200" height="9" fill="#eeeeee"/>
<g stroke="#a3a3a3" stroke-width="1.100">
  <path d="M661.500 115.700h-3.900v9.600h3.900M668.300 115.700h4.100v9.600h-4.100"/>
  <path d="M660.700 120.400h8.500" stroke="#b0b0b0" stroke-width="1"/>
  <path d="M664.600 113.700v13.400M662.700 115.600l1.900-1.900 1.900 1.900M662.700 125.300l1.900 1.900 1.900-1.900" stroke="#b4b4b4" stroke-width="1"/>
</g>
<use href="#cv" x="678.900" y="120.300" stroke="#bababa"/>
<!-- smartart -->
<path d="M657.200 141.300h10.500l3.800 3.600-3.800 3.600h-10.500l3.600-3.600z" fill="#c6c6c6" stroke="#a6a6a6" stroke-width=".8"/>
<rect x="663.300" y="146.700" width="9.400" height="6" fill="#fff" stroke="#9c9c9c" stroke-width="1.200"/>
<path d="M665 148.700h1M667 148.700h4M665 150.800h1M667 150.800h4" stroke="#a6a6a6" stroke-width=".9"/>
<use href="#cv" x="678.900" y="146.200" stroke="#bababa"/>
<use href="#launch" x="689" y="165.200" stroke="#b2b2b2"/>

<!-- ===== Dibujo ===== -->
<g id="shapes">
  <rect x="717.500" y="88.600" width="18" height="18" fill="#74b1e9" stroke="#1f7bd0" stroke-width="1"/>
  <circle cx="735.100" cy="106" r="11.200" fill="#fff"/>
  <circle cx="735.100" cy="106" r="9.700" fill="#f4f4f4" stroke="#404040" stroke-width="1.200"/>
</g>
<use href="#cv" x="727.800" y="143.300" stroke="#2b2b2b"/>
<g id="arrange">
  <rect x="773.500" y="92.700" width="19" height="18.700" fill="#f9cd80" stroke="#d98f2e" stroke-width="1"/>
  <rect x="768.400" y="87.500" width="13.400" height="12.900" fill="#fff"/>
  <rect x="769.700" y="88.800" width="10.800" height="10.300" fill="#f4f4f4" stroke="#404040" stroke-width="1.100"/>
  <rect x="784.300" y="103.400" width="13.400" height="13" fill="#fff"/>
  <rect x="785.700" y="104.800" width="10.700" height="10.400" fill="#f4f4f4" stroke="#404040" stroke-width="1.100"/>
</g>
<use href="#cv" x="779.900" y="143.300" stroke="#2b2b2b"/>
<g id="qstyles">
  <path d="M836 115h-7.600a1.800 1.800 0 0 1-1.800-1.800v-22.600a1.800 1.800 0 0 1 1.800-1.800h23.200a1.800 1.800 0 0 1 1.800 1.800v8M853.400 106v7.200a1.800 1.800 0 0 1-1.800 1.800h-7" fill="none" stroke="#9a9a9a" stroke-width="1.200"/>
  <rect x="827.300" y="89.500" width="25.400" height="24.800" rx="1.500" fill="#f1f1f1"/>
  <path d="M854.200 98.300c1 .6 1.300 1.600.6 2.500l-10.700 12.100-2.500-2.100 10.500-12.200c.6-.7 1.400-.8 2.100-.3z" fill="#fff" stroke="#a3a3a3" stroke-width="1"/>
  <path d="M841.400 110.600l2.800 2.400c-.6 2.200-3 3.700-5.600 3.600-1.600 0-3.300-.2-4.800-.6 1.700-.6 2.600-1.600 3.200-3 .8-1.800 2.400-2.800 4.400-2.400z" fill="#b8b8b8"/>
</g>
<use href="#cv" x="857.700" y="142.900" stroke="#bababa"/>
<!-- shape fill -->
<rect x="874.200" y="99.300" width="15.800" height="3.400" fill="#b6b6b6"/>
<g stroke="#a3a3a3" stroke-width="1" fill="none">
  <path d="M881.400 89l4.600 4.600-4.500 4.500-4.600-4.600z" fill="#fff"/>
  <path d="M882.600 90.200v-2.300a1.200 1.200 0 0 1 2.400 0v4.300"/>
  <path d="M885.600 91.500c1.500.7 2.300 2.200 2.300 5.700" />
</g>
<use href="#cv" x="897.800" y="94.200" stroke="#bababa"/>
<!-- shape outline -->
<rect x="874.200" y="125.300" width="15.800" height="3.400" fill="#b6b6b6"/>
<g stroke="#a3a3a3" stroke-width="1" fill="none">
  <path d="M884 114.700h-8.600v8.600h3.600"/>
  <path d="M887.500 113.700l1.900 1.800-7.400 7.400-2.800.9.900-2.800z" fill="#fff"/>
  <path d="M879.200 123.800l1.500-2.700 1.200 1.200z" fill="#a3a3a3"/>
</g>
<use href="#cv" x="897.800" y="120.200" stroke="#bababa"/>
<!-- shape effects -->
<g stroke="#9c9c9c" stroke-width="1" stroke-linejoin="round">
  <path d="M878.600 141.600h8.800l2.400 3.600-3.800 4h-11.400z" fill="#ececec"/>
  <path d="M874.600 149.200h11.400l3.800-4v2.800l-3.800 4.300h-10z" fill="#b4b4b4"/>
</g>
<use href="#cv" x="895.800" y="146" stroke="#bababa"/>
<use href="#launch" x="905.800" y="165.200" stroke="#b2b2b2"/>

<!-- ===== Edición ===== -->
<g stroke="#444" stroke-width="1.200" stroke-linecap="round"><circle cx="948.400" cy="96.700" r="5.300"/><path d="M944.600 100.700l-5.500 5.500"/></g>
<use href="#cv" x="942.800" y="141" stroke="#2b2b2b"/>
<!-- ===== Voz ===== -->
<g>
  <rect x="997.900" y="87.600" width="10.400" height="20" rx="5.200" fill="#6fb0ea" stroke="#2a6db5" stroke-width="1"/>
  <path d="M993.800 102.200c0 5 4 8.800 9.200 8.800s9.200-3.800 9.200-8.800M1003 111v5.300" stroke="#444" stroke-width="1.200"/>
</g>
<use href="#cv" x="999.900" y="144.100" stroke="#2b2b2b"/>
<!-- ===== Diseñador ===== -->
<g>
  <rect x="1052.600" y="93.400" width="22.800" height="16.900" fill="#f7f7f7"/>
  <path d="M1058 91.600h19.200v20.600h-26.600v-9.500" stroke="#404040" stroke-width="1.100"/>
  <path d="M1058.500 93.700h16.800v16.300h-22.500v-8" stroke="#6a6a6a" stroke-width="1"/>
  <path d="M1057.500 97.600h17.800M1069.500 97.600v12.400" stroke="#6a6a6a" stroke-width="1"/>
  <path d="M1053.600 86.500h6.800l-4.500 7.200h4l-11.200 12.300 3.500-9h-3.600z" fill="#fbc058" stroke="#ea8d1c" stroke-width="1" stroke-linejoin="round"/>
</g>
<!-- collapse ribbon -->
<path d="M1187.400 162.300l4.900 4.700 4.900-4.700" stroke="#2b2b2b" stroke-width="1.200"/>

<!-- ===== status bar ===== -->
<g stroke="#3a3a3a" stroke-width="1.100">
  <path d="M776 931.400h15.500M776 934.400h15.500M776 928.400h15.500" stroke-width="1"/>
  <path d="M780.300 925.700l3.400-3 3.400 3"/>
</g>
<g stroke="#333" stroke-width="1.100">
  <!-- normal view -->
  <rect x="856.500" y="923.500" width="13" height="10.500"/><path d="M859.500 923.500v10.500M859.500 931.500h10"/><rect x="862.500" y="926.500" width="4.500" height="2" stroke-width=".9"/>
  <!-- sorter -->
  <rect x="896.500" y="924" width="4.500" height="3"/><rect x="905" y="924" width="4.500" height="3"/><rect x="896.500" y="931.200" width="4.500" height="3"/><rect x="905" y="931.200" width="4.500" height="3"/>
  <!-- reading view -->
  <path d="M942.700 923.500c-1.800-1.100-3.700-1.400-5.600-1.300v10.500c1.900-.1 3.800.2 5.600 1.300 1.800-1.100 3.700-1.400 5.600-1.300v-10.500c-1.900-.1-3.800.2-5.600 1.300zM942.700 923.500v10.500"/>
  <path d="M938.600 925.200h2.500M938.600 927.200h2.500M938.600 929.200h2.500M938.600 931.200h2.500M944.300 925.200h2.500M944.300 927.200h2.500M944.300 929.200h2.500M944.300 931.200h2.500" stroke-width=".8"/>
  <!-- slideshow -->
  <path d="M976.400 922.600h12.400M977.700 922.600v7.200h9.800v-7.200M982.600 929.800v4.400M978.800 934.300h7.400"/><path d="M980.200 925.600h4.600" stroke-width="1.300"/>
  <!-- zoom -->
  <path d="M1008.800 928.600h8" stroke="#444"/>
  <path d="M1126.700 928.600h7.800M1130.600 924.700v7.800" stroke="#444"/>
</g>
<path d="M1022.500 928.600h99.500" stroke="#c0c0c0" stroke-width="1"/>
<path d="M1072.300 926v5.200" stroke="#c0c0c0" stroke-width="1"/>
<rect x="1046" y="923.200" width="4.600" height="11.400" fill="#6e6e6e"/>
<!-- fit -->
<g stroke="#333" stroke-width="1.100">
  <rect x="1187.300" y="924.800" width="7.600" height="7.600" rx="1"/>
  <path d="M1189 922.700l2.100-2 2.100 2M1189 934.500l2.100 2 2.100-2M1185.400 926.500l-2 2.100 2 2.100M1196.800 926.500l2 2.100-2 2.100"/>
</g>
</svg>

<!-- text -->
<span class="t" style="left:55.0px;top:19.00px;font-size:12.0px;color:#242424;transform:scaleX(1.0211);-webkit-text-stroke:.2px #242424;">Autoguardado</span>
<span class="t" style="left:230.0px;top:19.00px;font-size:12.0px;color:#242424;transform:scaleX(0.9780);-webkit-text-stroke:.2px #242424;">Presentación1  -  PowerPoint</span>
<span class="t" style="left:502.0px;top:19.00px;font-size:12.0px;color:#444;transform:scaleX(1.0038);-webkit-text-stroke:.2px #444;">Buscar</span>
<span class="t" style="left:967.0px;top:19.00px;font-size:12.0px;color:#242424;transform:scaleX(0.9560);-webkit-text-stroke:.2px #242424;">Edgar Otero</span>
<span class="t" style="left:15.0px;top:59.80px;font-size:11.9px;color:#262626;transform:scaleX(1.0717);-webkit-text-stroke:.2px #262626;">Archivo</span>
<span class="t" style="left:158.0px;top:59.80px;font-size:11.9px;color:#262626;transform:scaleX(1.0915);-webkit-text-stroke:.2px #262626;">Insertar</span>
<span class="t" style="left:238.0px;top:59.80px;font-size:11.9px;color:#262626;transform:scaleX(1.0671);-webkit-text-stroke:.2px #262626;">Diseño</span>
<span class="t" style="left:314.5px;top:59.80px;font-size:11.9px;color:#262626;transform:scaleX(1.0453);-webkit-text-stroke:.2px #262626;">Transiciones</span>
<span class="t" style="left:422.0px;top:59.80px;font-size:11.9px;color:#262626;transform:scaleX(1.0650);-webkit-text-stroke:.2px #262626;">Animaciones</span>
<span class="t" style="left:534.0px;top:59.80px;font-size:11.9px;color:#262626;transform:scaleX(1.0901);-webkit-text-stroke:.2px #262626;">Presentación con diapositivas</span>
<span class="t" style="left:744.0px;top:59.80px;font-size:11.9px;color:#262626;transform:scaleX(1.0419);-webkit-text-stroke:.2px #262626;">Revisar</span>
<span class="t" style="left:821.0px;top:59.80px;font-size:11.9px;color:#262626;transform:scaleX(1.0673);-webkit-text-stroke:.2px #262626;">Vista</span>
<span class="t" style="left:884.5px;top:59.80px;font-size:11.9px;color:#262626;transform:scaleX(1.0843);-webkit-text-stroke:.2px #262626;">Grabación</span>
<span class="t" style="left:980.0px;top:59.80px;font-size:11.9px;color:#262626;transform:scaleX(1.0682);-webkit-text-stroke:.2px #262626;">Ayuda</span>
<span class="t" style="left:91.0px;top:59.80px;font-size:11.9px;color:#1a1a1a;transform:scaleX(0.9980);font-weight:700;">Inicio</span>
<span class="t" style="left:13.4px;top:164.70px;font-size:10.2px;color:#242424;transform:scaleX(1.0686);-webkit-text-stroke:.2px #242424;">Deshacer</span>
<span class="t" style="left:73.0px;top:164.70px;font-size:10.2px;color:#242424;transform:scaleX(1.0991);-webkit-text-stroke:.2px #242424;">Portapapeles</span>
<span class="t" style="left:199.0px;top:164.70px;font-size:10.2px;color:#242424;transform:scaleX(1.1195);-webkit-text-stroke:.2px #242424;">Diapositivas</span>
<span class="t" style="left:380.8px;top:164.70px;font-size:10.2px;color:#242424;transform:scaleX(1.0908);-webkit-text-stroke:.2px #242424;">Fuente</span>
<span class="t" style="left:582.7px;top:164.70px;font-size:10.2px;color:#242424;transform:scaleX(1.0682);-webkit-text-stroke:.2px #242424;">Párrafo</span>
<span class="t" style="left:783.5px;top:164.70px;font-size:10.2px;color:#242424;transform:scaleX(1.1734);-webkit-text-stroke:.2px #242424;">Dibujo</span>
<span class="t" style="left:993.3px;top:164.70px;font-size:10.2px;color:#242424;transform:scaleX(1.0294);-webkit-text-stroke:.2px #242424;">Voz</span>
<span class="t" style="left:1037.7px;top:164.70px;font-size:10.2px;color:#242424;transform:scaleX(1.1176);-webkit-text-stroke:.2px #242424;">Diseñador</span>
<span class="t" style="left:79.4px;top:123.60px;font-size:11.7px;color:#242424;transform:scaleX(0.9326);-webkit-text-stroke:.2px #242424;">Pegar</span>
<span class="t" style="left:192.0px;top:123.20px;font-size:11.7px;color:#242424;transform:scaleX(1.0001);-webkit-text-stroke:.2px #242424;">Nueva</span>
<span class="t" style="left:175.0px;top:138.80px;font-size:11.7px;color:#242424;transform:scaleX(1.0139);-webkit-text-stroke:.2px #242424;">diapositiva</span>
<span class="t" style="left:711.4px;top:123.20px;font-size:11.7px;color:#242424;transform:scaleX(0.9615);-webkit-text-stroke:.2px #242424;">Formas</span>
<span class="t" style="left:757.8px;top:123.20px;font-size:11.7px;color:#242424;transform:scaleX(0.9722);-webkit-text-stroke:.2px #242424;">Organizar</span>
<span class="t" style="left:824.7px;top:123.20px;font-size:11.7px;color:#a3a3a3;transform:scaleX(0.9321);">Estilos</span>
<span class="t" style="left:815.4px;top:138.80px;font-size:11.7px;color:#a3a3a3;transform:scaleX(0.9936);">rápidos</span>
<span class="t" style="left:926.5px;top:120.80px;font-size:11.7px;color:#242424;transform:scaleX(0.9936);-webkit-text-stroke:.2px #242424;">Edición</span>
<span class="t" style="left:987.5px;top:123.20px;font-size:11.7px;color:#242424;transform:scaleX(0.9990);-webkit-text-stroke:.2px #242424;">Dictar</span>
<span class="t" style="left:1042.0px;top:123.20px;font-size:11.7px;color:#242424;transform:scaleX(0.9656);-webkit-text-stroke:.2px #242424;">Ideas de</span>
<span class="t" style="left:1046.4px;top:138.80px;font-size:11.7px;color:#242424;transform:scaleX(0.9985);-webkit-text-stroke:.2px #242424;">diseño</span>
<span class="t" style="left:310.0px;top:114.00px;font-size:13.6px;color:#a3a3a3;transform:scaleX(1.0785);font-weight:700;">N</span>
<span class="t" style="left:337.0px;top:114.00px;font-size:13.6px;color:#a3a3a3;transform:scaleX(1.0355);font-style:italic;">K</span>
<span class="t" style="left:364.0px;top:114.00px;font-size:13.6px;color:#a3a3a3;transform:scaleX(0.8262);text-decoration:underline;text-underline-offset:1.5px;text-decoration-skip-ink:none;text-decoration-thickness:1px">S</span>
<span class="t" style="left:389.0px;top:113.50px;font-size:14.5px;color:#a3a3a3;transform:scaleX(0.9305);font-weight:700;text-shadow:1px 1px 1px #ddd">S</span>
<span class="t" style="left:413.6px;top:115.70px;font-size:11.6px;color:#a3a3a3;transform:scaleX(0.9918);">ab</span>
<span class="t" style="left:390.3px;top:140.30px;font-size:14.2px;color:#a3a3a3;transform:scaleX(0.9390);">Aa</span>
<span class="t" style="left:352.6px;top:137.50px;font-size:14px;color:#9a9a9a;transform:scaleX(1.0167);">A</span>
<span class="t" style="left:438.3px;top:112.60px;font-size:11.3px;color:#a3a3a3;transform:scaleX(1.1100);">AV</span>
<span class="t" style="left:436.3px;top:138.40px;font-size:16.9px;color:#a3a3a3;transform:scaleX(0.8953);">A</span>
<span class="t" style="left:464.0px;top:141.40px;font-size:12.9px;color:#a3a3a3;transform:scaleX(0.9292);">A</span>
<span class="t" style="left:490.3px;top:138.40px;font-size:16.6px;color:#a3a3a3;transform:scaleX(0.9298);">A</span>
<span class="t" style="left:308.6px;top:499.90px;font-size:42.6px;color:#111;transform:scaleX(0.9045);-webkit-text-stroke:.8px #fff">Haga clic para agregar título</span>
<span class="t" style="left:440.8px;top:559.30px;font-size:15.4px;color:#1a1a1a;transform:scaleX(1.0070);">Haga clic para agregar subtítulo</span>
<span class="t" style="left:941.6px;top:195.60px;font-size:20.3px;color:#b7472a;transform:scaleX(0.9971);-webkit-text-stroke:.55px #f0f0f0">Ideas de diseño</span>
<span class="t" style="left:941.4px;top:229.60px;font-size:11.0px;color:#b7472a;transform:scaleX(1.0469);text-decoration:underline;text-underline-offset:1.5px;text-decoration-skip-ink:none;text-decoration-thickness:1px">Detener la presentación de ideas para nuevas</span>
<span class="t" style="left:941.4px;top:245.70px;font-size:11.0px;color:#b7472a;transform:scaleX(1.0535);text-decoration:underline;text-underline-offset:1.5px;text-decoration-skip-ink:none;text-decoration-thickness:1px">presentaciones</span>
<span class="t" style="left:8.6px;top:925.70px;font-size:10.3px;color:#262626;transform:scaleX(1.0982);-webkit-text-stroke:.2px #262626;">Diapositiva 1 de 1</span>
<span class="t" style="left:794.9px;top:924.30px;font-size:10.5px;color:#262626;transform:scaleX(1.0241);-webkit-text-stroke:.2px #262626;">Notas</span>
<span class="t" style="left:1148.8px;top:925.30px;font-size:10.3px;color:#262626;transform:scaleX(0.9751);-webkit-text-stroke:.2px #262626;">55 %</span>
<span class="t" style="left:961.5px;top:295.50px;font-size:12.6px;color:#f2f6fa;transform:scaleX(1.0716);">HAGA CLIC</span>
<span class="t" style="left:961.5px;top:309.50px;font-size:12.6px;color:#f2f6fa;transform:scaleX(1.0787);">PARA</span>
<span class="t" style="left:961.5px;top:323.50px;font-size:12.6px;color:#f2f6fa;transform:scaleX(1.0876);">AGREGAR</span>
<span class="t" style="left:961.5px;top:337.50px;font-size:12.6px;color:#f2f6fa;transform:scaleX(1.0719);">TÍTULO</span>
<span class="t" style="left:963.0px;top:390.00px;font-size:5.2px;color:#e8eef5;transform:scaleX(1.1421);">Haga clic para agregar subtítulo</span>
<span class="t" style="left:1081.5px;top:431.50px;font-size:18.2px;color:#ffffff;transform:scaleX(1.1153);">Haga</span>
<span class="t" style="left:1081.5px;top:453.50px;font-size:18.2px;color:#ffffff;transform:scaleX(1.1220);">clic para</span>
<span class="t" style="left:1081.5px;top:476.00px;font-size:18.2px;color:#ffffff;transform:scaleX(1.1243);">agregar</span>
<span class="t" style="left:1081.5px;top:498.00px;font-size:18.2px;color:#ffffff;transform:scaleX(1.1157);">título</span>
<span class="t" style="left:1081.0px;top:524.50px;font-size:3.6px;color:#ddd;transform:scaleX(1.3037);font-weight:700;letter-spacing:.2px">HAGA CLIC PARA AGREGAR</span>
<span class="t" style="left:1081.0px;top:530.50px;font-size:3.6px;color:#ddd;transform:scaleX(1.3131);font-weight:700;letter-spacing:.2px">SUBTÍTULO</span>
<span class="t" style="left:981.0px;top:634.80px;font-size:12.2px;color:#f4f4f4;transform:scaleX(1.0352);">Haga clic para agregar título</span>
<span class="t" style="left:1023.5px;top:655.20px;font-size:5.2px;color:#eee;transform:scaleX(0.9994);">Haga clic para agregar subtítulo</span>
<span class="t" style="left:974.5px;top:736.00px;font-size:10.6px;color:#111;transform:scaleX(1.0808);font-weight:700;">Haga</span>
<span class="t" style="left:979.0px;top:749.50px;font-size:10.6px;color:#111;transform:scaleX(1.0752);font-weight:700;">clic</span>
<span class="t" style="left:976.5px;top:762.50px;font-size:10.6px;color:#111;transform:scaleX(1.0719);font-weight:700;">para</span>
<span class="t" style="left:967.5px;top:776.20px;font-size:10.6px;color:#111;transform:scaleX(1.0804);font-weight:700;">agregar</span>
<span class="t" style="left:974.0px;top:789.50px;font-size:10.6px;color:#111;transform:scaleX(1.1008);font-weight:700;">título</span>
<span class="t" style="left:971.0px;top:810.30px;font-size:6.4px;color:#111;transform:scaleX(1.1938);font-weight:700;">Haga clic</span>
<span class="t" style="left:980.0px;top:819.20px;font-size:6.4px;color:#111;transform:scaleX(1.1481);font-weight:700;">para</span>
<span class="t" style="left:974.0px;top:828.00px;font-size:6.4px;color:#111;transform:scaleX(1.1939);font-weight:700;">agregar</span>
<span class="t" style="left:971.5px;top:837.50px;font-size:6.4px;color:#111;transform:scaleX(1.1673);font-weight:700;">subtítulo</span>
</div>
</body>
</html>
